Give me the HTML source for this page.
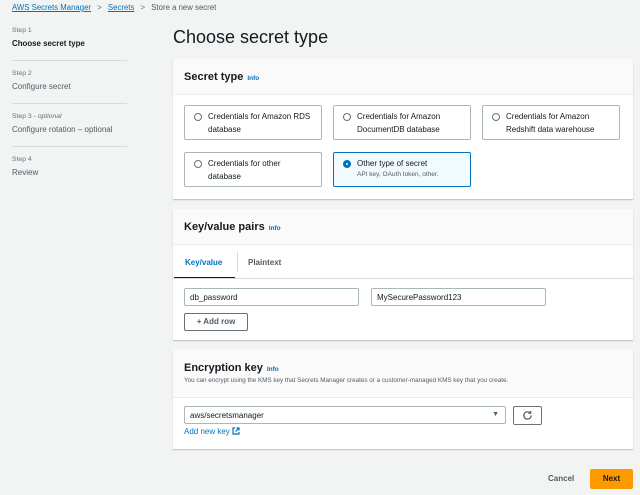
<!DOCTYPE html>
<html><head><style>
*{box-sizing:border-box;margin:0;padding:0}
body{width:640px;height:495px;background:#f2f3f3;font-family:"Liberation Sans",sans-serif;color:#16191f;position:relative;overflow:hidden;font-size:8px}
.a{position:absolute}
.lnk{color:#0073bb;text-decoration:underline}
.step{color:#687078;font-size:6.8px}
.side{color:#545b64;font-size:8px}
.div{position:absolute;left:12px;width:115px;height:1px;background:#d5dbdb}
.card{position:absolute;left:173px;width:460px;background:#fff;box-shadow:0 1px 1px rgba(0,28,36,.25)}
.hdr{background:#fafafa;border-bottom:1px solid #eaeded;position:relative}
.h2{position:absolute;left:11px;font-weight:bold;font-size:11px}
.info{color:#0073bb;font-size:6.5px;font-weight:bold;margin-left:4px}
.tile{position:absolute;width:138px;height:35px;border:1px solid #aab7b8;border-radius:2px;background:#fff}
.tile .r{position:absolute;left:9px;top:7px;width:8px;height:8px;border:1px solid #687078;border-radius:50%}
.tile .t{position:absolute;left:23px;top:5px;font-size:8px;line-height:12.5px}
.inp{position:absolute;height:18px;border:1px solid #aab7b8;border-radius:2px;background:#fff;font-size:8px;padding:4px 5px}
.btn{position:absolute;border:1px solid #545b64;border-radius:2px;background:#fff;font-weight:bold;color:#545b64;text-align:center}
</style></head><body>
<div class="a" style="left:12px;top:3px;font-size:7.8px"><span class="lnk">AWS Secrets Manager</span> <span style="color:#687078;margin:0 4px">&gt;</span> <span class="lnk">Secrets</span> <span style="color:#687078;margin:0 4px">&gt;</span> <span style="color:#545b64">Store a new secret</span></div>

<div class="a step" style="left:12px;top:27px">Step 1</div>
<div class="a" style="left:12px;top:39px;font-weight:bold;font-size:7.9px">Choose secret type</div>
<div class="div" style="top:60px"></div>
<div class="a step" style="left:12px;top:70px">Step 2</div>
<div class="a side" style="left:12px;top:82px">Configure secret</div>
<div class="div" style="top:103px"></div>
<div class="a step" style="left:12px;top:113px">Step 3 - <i>optional</i></div>
<div class="a side" style="left:12px;top:125px">Configure rotation – optional</div>
<div class="div" style="top:146px"></div>
<div class="a step" style="left:12px;top:156px">Step 4</div>
<div class="a side" style="left:12px;top:168px">Review</div>

<div class="a" style="left:173px;top:27px;font-size:18px">Choose secret type</div>

<div class="card" style="top:59px;height:140px">
 <div class="hdr" style="height:36px"><div class="h2" style="top:12px">Secret type<span class="info">Info</span></div></div>
 <div class="tile" style="left:11px;top:46px"><div class="r"></div><div class="t">Credentials for Amazon RDS<br>database</div></div>
 <div class="tile" style="left:160px;top:46px"><div class="r"></div><div class="t">Credentials for Amazon<br>DocumentDB database</div></div>
 <div class="tile" style="left:309px;top:46px"><div class="r"></div><div class="t">Credentials for Amazon<br>Redshift data warehouse</div></div>
 <div class="tile" style="left:11px;top:93px"><div class="r"></div><div class="t">Credentials for other<br>database</div></div>
 <div class="tile" style="left:160px;top:93px;border-color:#0073bb;background:#f1faff"><div class="r" style="border:3px solid #0073bb"></div><div class="t">Other type of secret<br><span style="font-size:6.5px;color:#545b64;position:relative;top:-3px">API key, OAuth token, other.</span></div></div>
</div>

<div class="card" style="top:209px;height:131px">
 <div class="hdr" style="height:36px"><div class="h2" style="top:12px">Key/value pairs<span class="info">Info</span></div></div>
 <div class="a" style="left:12px;top:49px;font-weight:bold;color:#0073bb;font-size:8px">Key/value</div>
 <div class="a" style="left:64px;top:43px;width:1px;height:20px;background:#d5dbdb"></div>
 <div class="a" style="left:75px;top:49px;font-weight:bold;color:#545b64;font-size:8px">Plaintext</div>
 <div class="a" style="left:1px;top:68px;width:61px;height:2px;background:#16191f"></div>
 <div class="a" style="left:0;top:69px;width:460px;height:1px;background:#d5dbdb"></div>
 <div class="inp" style="left:11px;top:79px;width:175px">db_password</div>
 <div class="inp" style="left:198px;top:79px;width:175px">MySecurePassword123</div>
 <div class="btn" style="left:11px;top:104px;width:64px;height:18px;line-height:16px;font-size:8px;border-color:#687078">+ Add row</div>
</div>

<div class="card" style="top:350px;height:99px">
 <div class="hdr" style="height:48px"><div class="h2" style="top:12px">Encryption key<span class="info">Info</span></div>
 <div class="a" style="left:11px;top:27px;font-size:6.3px;color:#545b64">You can encrypt using the KMS key that Secrets Manager creates or a customer-managed KMS key that you create.</div></div>
 <div class="inp" style="left:11px;top:56px;width:322px">aws/secretsmanager<span style="position:absolute;right:6px;top:4px;font-size:7px;color:#545b64">▼</span></div>
 <div class="btn" style="left:340px;top:56px;width:29px;height:19px;border-color:#687078"><svg width="11" height="11" viewBox="0 0 12 12" style="margin-top:3px"><path d="M10 6a4 4 0 1 1-1.2-2.9" fill="none" stroke="#545b64" stroke-width="1.3"/><path d="M9.5 1v2.6H7" fill="none" stroke="#545b64" stroke-width="1.3"/></svg></div>
 <div class="a" style="left:11px;top:77px;color:#0073bb;font-size:8px">Add new key <svg width="8" height="8" viewBox="0 0 8 8" style="vertical-align:-1px"><path d="M3 1H1v6h6V5M4.5 1H7v2.5M7 1L3.5 4.5" fill="none" stroke="#0073bb" stroke-width="1.2"/></svg></div>
</div>

<div class="a" style="left:548px;top:474px;font-weight:bold;color:#545b64;font-size:8px">Cancel</div>
<div class="a" style="left:590px;top:469px;width:43px;height:20px;background:#ff9900;border-radius:2px;font-weight:bold;font-size:8px;text-align:center;line-height:20px">Next</div>
</body></html>
